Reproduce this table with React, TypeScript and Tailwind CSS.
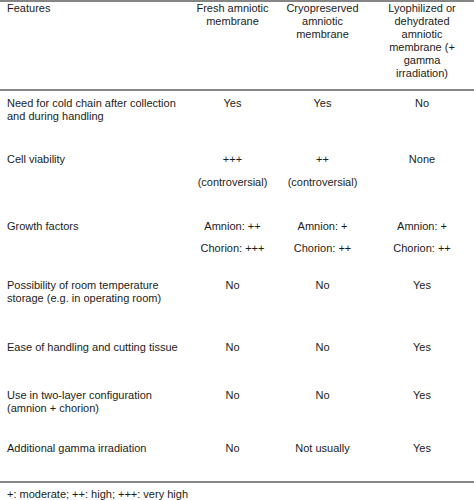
const rows = [
  {
    feature: "Need for cold chain after collection and during handling",
    cells: [["Yes"], ["Yes"], ["No"]],
    height: "h-[56px]",
    gap: "",
  },
  {
    feature: "Cell viability",
    cells: [["+++", "(controversial)"], ["++", "(controversial)"], ["None"]],
    height: "h-[67px]",
    gap: "mt-[10px]",
  },
  {
    feature: "Growth factors",
    cells: [
      ["Amnion: ++", "Chorion: +++"],
      ["Amnion: +", "Chorion: ++"],
      ["Amnion: +", "Chorion: ++"],
    ],
    height: "h-[59px]",
    gap: "mt-[9px]",
  },
  {
    feature: "Possibility of room temperature storage (e.g. in operating room)",
    cells: [["No"], ["No"], ["Yes"]],
    height: "h-[62px]",
    gap: "",
  },
  {
    feature: "Ease of handling and cutting tissue",
    cells: [["No"], ["No"], ["Yes"]],
    height: "h-[48px]",
    gap: "",
  },
  {
    feature: "Use in two-layer configuration (amnion + chorion)",
    cells: [["No"], ["No"], ["Yes"]],
    height: "h-[53px]",
    gap: "",
  },
  {
    feature: "Additional gamma irradiation",
    cells: [["No"], ["Not usually"], ["Yes"]],
    height: "h-[45px]",
    gap: "",
  },
];

const cols = "grid grid-cols-[190px_85px_95px_104px]";

export default function App() {
  return (
    <div className="w-[474px] h-[500px] overflow-hidden bg-white text-[11px] leading-[13px] text-[#1c1c1c] font-['Liberation_Sans',Arial,sans-serif]">
      <div className={`${cols} h-[91px] border-y-2 border-[#858585]`}>
        <div className="pl-[7px]">Features</div>
        <div className="px-1 text-center">Fresh amniotic membrane</div>
        <div className="px-1 text-center">Cryopreserved amniotic membrane</div>
        <div className="px-2 text-center">
          Lyophilized or dehydrated amniotic membrane (+ gamma irradiation)
        </div>
      </div>

      <div className="border-b-2 border-[#858585]">
        {rows.map((row) => (
          <div key={row.feature} className={`${cols} ${row.height} pt-[6px]`}>
            <div className="pl-[7px] pr-1">{row.feature}</div>
            {row.cells.map((cell, i) => (
              <div key={i} className="px-1 text-center">
                {cell.map((line, j) => (
                  <p key={j} className={j > 0 ? row.gap : ""}>
                    {line}
                  </p>
                ))}
              </div>
            ))}
          </div>
        ))}
      </div>

      <p className="pl-[7px] mt-[5px]">+: moderate; ++: high; +++: very high</p>
    </div>
  );
}
